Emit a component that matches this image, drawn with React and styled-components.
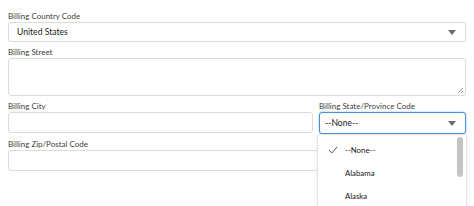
import styled, { createGlobalStyle } from 'styled-components';

const GlobalStyle = createGlobalStyle`
  html, body {
    margin: 0;
    padding: 0;
    background: #ffffff;
    font-family: Lato, "Liberation Sans", sans-serif;
  }
  body {
    min-height: 206px;
  }
`;

const Form = styled.div`
  width: 458px;
  min-height: 206px;
  box-sizing: content-box;
  padding: 10px 8px 0 8px;
  display: flex;
  flex-direction: column;
  gap: 4px;
`;

const Field = styled.div`
  display: flex;
  flex-direction: column;
  position: relative;
`;

const Row = styled.div`
  display: grid;
  grid-template-columns: 1fr 147px;
  column-gap: 6px;
`;

const Label = styled.div`
  font-size: 8px;
  line-height: 12px;
  color: #3e3e3c;
`;

const Box = styled.div`
  box-sizing: border-box;
  height: ${(p) => p.h || 21}px;
  border: 1px solid ${(p) => (p.focus ? '#4a90d9' : '#dddbda')};
  border-radius: 3px;
  background: #fff;
  display: flex;
  align-items: center;
  padding: 0 9px 0 ${(p) => p.pl || 8}px;
  font-size: 8.6px;
  color: #181818;
  position: relative;
  box-shadow: ${(p) => (p.focus ? '0 0 2px #8ab8ea' : 'none')};
`;

const Value = styled.span`
  flex: 1;
`;

const Caret = styled.span`
  width: 0;
  height: 0;
  border-left: 4px solid transparent;
  border-right: 4px solid transparent;
  border-top: 5px solid #706e6b;
`;

const Grip = styled.svg`
  position: absolute;
  right: 1px;
  bottom: 1px;
`;

const Menu = styled.div`
  position: absolute;
  top: 34px;
  left: -2px;
  width: 150px;
  height: 80px;
  box-sizing: border-box;
  background: #fff;
  border: 1px solid #e5e5e5;
  border-radius: 3px;
  box-shadow: 0 2px 3px rgba(0, 0, 0, 0.12);
  padding-top: 3px;
  z-index: 2;
`;

const Option = styled.div`
  height: 23px;
  display: flex;
  align-items: center;
  font-size: 7.8px;
  color: #181818;
  padding-left: 10px;
`;

const Check = styled.span`
  width: 17px;
  display: flex;
  align-items: center;
`;

const Scroll = styled.div`
  position: absolute;
  right: 3px;
  top: 2px;
  width: 6px;
  height: 40px;
  border-radius: 3px;
  background: #c4c4c4;
`;

export default function App() {
  return (
    <>
      <GlobalStyle />
      <Form>
        <Field>
          <Label>Billing Country Code</Label>
          <Box h={20}>
            <Value>United States</Value>
            <Caret />
          </Box>
        </Field>
        <Field>
          <Label>Billing Street</Label>
          <Box h={38}>
            <Grip width="7" height="7" viewBox="0 0 7 7">
              <path d="M1 6 L6 1 M4 6 L6 4" stroke="#888" strokeWidth="0.8" />
            </Grip>
          </Box>
        </Field>
        <Row>
          <Field>
            <Label>Billing City</Label>
            <Box />
          </Field>
          <Field>
            <Label>Billing State/Province Code</Label>
            <Box h={22} pl={5} focus>
              <Value>--None--</Value>
              <Caret />
            </Box>
            <Menu>
              <Option>
                <Check>
                  <svg width="10" height="8" viewBox="0 0 10 8">
                    <path d="M1 4 L3.8 7 L9 1" fill="none" stroke="#555" strokeWidth="1" />
                  </svg>
                </Check>
                --None--
              </Option>
              <Option>
                <Check />
                Alabama
              </Option>
              <Option>
                <Check />
                Alaska
              </Option>
              <Scroll />
            </Menu>
          </Field>
        </Row>
        <Field>
          <Label>Billing Zip/Postal Code</Label>
          <Box />
        </Field>
      </Form>
    </>
  );
}
